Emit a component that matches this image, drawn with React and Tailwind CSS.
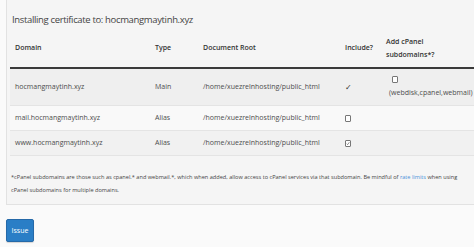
import React from 'react';

const rows = [
  { domain: 'hocmangmaytinh.xyz', type: 'Main', include: 'check', addon: true, bg: 'bg-[#efefef]', h: 'h-[37px]' },
  { domain: 'mail.hocmangmaytinh.xyz', type: 'Alias', include: 'box', bg: 'bg-[#f9f9f9]', h: 'h-[25px]' },
  { domain: 'www.hocmangmaytinh.xyz', type: 'Alias', include: 'checked', bg: 'bg-[#f1f1f1]', h: 'h-[25px]' },
];

const Box = ({ checked }) => (
  <span className="inline-flex w-[6px] h-[7px] border border-[#777] rounded-[1px] items-center justify-center bg-white align-middle">
    {checked && (
      <svg viewBox="0 0 6 7" className="w-[6px] h-[7px]" fill="none" stroke="#444" strokeWidth="0.9">
        <path d="M1 3.8 L2.4 5.2 L5 1.6" />
      </svg>
    )}
  </span>
);

const App = () => {
  return (
    <div className="w-[474px] h-[247px] bg-[#fafafa] overflow-hidden font-['Open_Sans',sans-serif] text-[#4d4d4d]">
      {/* Panel */}
      <div className="ml-[6px] h-[205px] bg-[#f5f5f5] border-l border-b border-[#e2e2e2] pl-[3px]">
        <h2 className="pt-[13px] pl-[2px] text-[9.5px] leading-[14px] tracking-[-0.35px] text-[#444] font-normal">
          Installing certificate to: hocmangmaytinh.xyz
        </h2>
        <table className="mt-[1px] w-[468px] table-fixed border-collapse text-[7px] leading-[13px]">
          <colgroup>
            <col className="w-[140px]" />
            <col className="w-[48px]" />
            <col className="w-[142px]" />
            <col className="w-[41px]" />
            <col />
          </colgroup>
          <thead>
            <tr className="h-[40px] border-b-2 border-[#3a3a3a] text-[#333]">
              <th className="text-left pl-[5px] font-semibold">Domain</th>
              <th className="text-left pl-[5px] font-semibold">Type</th>
              <th className="text-left pl-[5px] font-semibold">Document Root</th>
              <th className="text-left pl-[5px] font-semibold">Include?</th>
              <th className="text-left pl-[5px] font-semibold">
                Add cPanel
                <br />
                subdomains*?
              </th>
            </tr>
          </thead>
          <tbody>
            {rows.map((r) => (
              <tr key={r.domain} className={`${r.bg} ${r.h} border-b border-[#e4e4e4]`}>
                <td className="pl-[5px] text-[#4d4d4d]">{r.domain}</td>
                <td className="pl-[5px] text-[#4d4d4d]">{r.type}</td>
                <td className="pl-[5px] text-[#4d4d4d]">/home/xuezrelnhosting/public_html</td>
                <td className="pl-[5px]">
                  {r.include === 'check' && <span className="text-[#333] text-[8px]">✓</span>}
                  {r.include === 'box' && <Box />}
                  {r.include === 'checked' && <Box checked />}
                </td>
                <td className="pl-[8px] whitespace-nowrap">
                  {r.addon && (
                    <div className="flex flex-col">
                      <span className="h-[11px] flex items-start pl-[3px]"><Box /></span>
                      <span className="leading-[11px] text-[#4d4d4d]">(webdisk,cpanel,webmail)</span>
                    </div>
                  )}
                </td>
              </tr>
            ))}
          </tbody>
        </table>
        <p className="mt-[15px] pl-[1px] pr-[10px] text-[5.6px] leading-[13px] text-[#444]">
          *cPanel subdomains are those such as cpanel.* and webmail.*, which when added, allow access to cPanel services via that subdomain. Be mindful of{' '}
          <span className="text-[#4a90d9]">rate limits</span> when using cPanel subdomains for multiple domains.
        </p>
      </div>

      <button className="mt-[14px] ml-[6px] w-[28px] h-[23px] bg-[#2a7ec6] border border-[#2569a8] rounded-[2px] text-white text-[7px] leading-none shadow-[0_1px_1px_rgba(0,0,0,0.15)]">
        Issue
      </button>
    </div>
  );
};

export default App;
